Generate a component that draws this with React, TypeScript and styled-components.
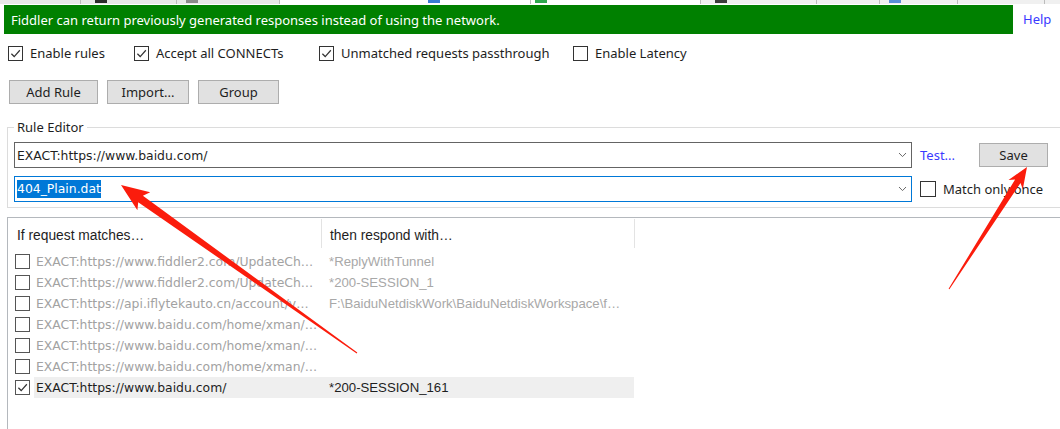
import React from 'react';
import styled, { createGlobalStyle } from 'styled-components';

const UI_FONT = `'Noto Sans', 'Open Sans', sans-serif`;
const LIST_FONT = `'Liberation Sans', Arial, sans-serif`;
const URL_FONT = `'DejaVu Sans', Verdana, sans-serif`;

const GlobalStyle = createGlobalStyle`
    html, body {
        margin: 0;
        padding: 0;
        background: #fff;
    }
    body {
        width: 1060px;
        height: 429px;
        overflow: hidden;
    }
`;

const Page = styled.div`
    color: #1e1e1e;
    display: flex;
    flex-direction: column;
    font-family: ${UI_FONT};
    font-size: 13px;
    height: 429px;
    overflow: hidden;
    position: relative;
    width: 1060px;
`;

/* ---------- tab strip remnant ---------- */

const TabStrip = styled.div`
    display: flex;
    flex-shrink: 0;
    height: 4px;
`;

const TabStub = styled.div<{ $w: number; $bg: string; $mark?: string; $markAt?: number }>`
    background: ${props => props.$bg};
    border-right: 1px solid #bcbcbc;
    flex-shrink: 0;
    position: relative;
    width: ${props => props.$w}px;

    &::after {
        background: ${props => props.$mark || 'transparent'};
        content: '';
        height: 3px;
        left: ${props => props.$markAt || 0}px;
        position: absolute;
        top: 0;
        width: 12px;
    }
`;

/* ---------- banner ---------- */

const BannerRow = styled.div`
    align-items: center;
    display: flex;
    flex-shrink: 0;
    height: 29px;
    margin-top: 1px;
    padding-left: 4px;
`;

const Banner = styled.div`
    align-items: center;
    background: #008000;
    box-sizing: border-box;
    color: #fff;
    display: flex;
    height: 100%;
    padding-left: 7px;
    width: 1009px;
`;

const Link = styled.span`
    color: #3a3aff;
    cursor: pointer;
    font-size: 13px;
`;

const HelpLink = styled(Link)`
    margin-left: 10px;
    margin-top: -2px;
`;

/* ---------- options ---------- */

const OptionsRow = styled.div`
    align-items: center;
    display: flex;
    flex-shrink: 0;
    height: 16px;
    margin-top: 11px;
    padding-left: 8px;
`;

const CheckItem = styled.label<{ $w?: number }>`
    align-items: center;
    display: flex;
    flex-shrink: 0;
    gap: 7px;
    white-space: nowrap;
    ${props => (props.$w ? `width: ${props.$w}px;` : '')}
`;

const Box = styled.span<{ $size: number; $tone: string }>`
    align-items: center;
    background: #fff;
    border: 1px solid ${props => props.$tone};
    box-sizing: border-box;
    display: inline-flex;
    flex-shrink: 0;
    height: ${props => props.$size}px;
    justify-content: center;
    width: ${props => props.$size}px;
`;

const ButtonRow = styled.div`
    display: flex;
    flex-shrink: 0;
    gap: 9px;
    margin-top: 19px;
    padding-left: 9px;
`;

const Button = styled.button<{ $w: number }>`
    background: #e1e1e1;
    border: 1px solid #adadad;
    border-radius: 0;
    color: #1e1e1e;
    font-family: ${UI_FONT};
    font-size: 13px;
    height: 24px;
    padding: 0;
    width: ${props => props.$w}px;
`;

/* ---------- rule editor ---------- */

const RuleEditor = styled.fieldset`
    border: 1px solid #dcdcdc;
    flex-shrink: 0;
    margin: 15px -12px 0 7px;
    padding: 7px 0 5px 6px;
`;

const Legend = styled.legend`
    color: #1e1e1e;
    font-size: 13px;
    line-height: 16px;
    margin-left: 0;
    padding: 0 3px;
`;

const EditorGrid = styled.div`
    align-items: center;
    column-gap: 8px;
    display: grid;
    grid-template-columns: 898px auto;
    row-gap: 8px;
`;

const Combo = styled.div<{ $focused?: boolean }>`
    align-items: center;
    background: #fff;
    border: 1px solid ${props => (props.$focused ? '#0078d7' : '#646464')};
    box-sizing: border-box;
    display: flex;
    font-family: ${URL_FONT};
    font-size: 12.4px;
    height: 26px;
    justify-content: space-between;
    padding: 0 4px 0 2px;
`;

const Selected = styled.span`
    background: #0078d7;
    color: #fff;
    line-height: 18px;
`;

const SideCell = styled.div`
    align-items: center;
    display: flex;
`;

const SaveButton = styled(Button)`
    margin-left: 24px;
`;

/* ---------- rule list ---------- */

const RuleList = styled.div`
    border-left: 1px solid #b4b8bd;
    border-top: 1px solid #b4b8bd;
    flex: 1;
    margin-left: 7px;
    margin-top: 9px;
`;

const ListHeader = styled.div`
    box-sizing: border-box;
    display: flex;
    font-family: ${LIST_FONT};
    font-size: 13.8px;
    height: 33px;
    padding-top: 1px;
`;

const HeaderCell = styled.div<{ $w: number; $pad: number }>`
    align-items: center;
    border-right: 1px solid #e3e3e3;
    box-sizing: border-box;
    display: flex;
    height: 29px;
    padding-left: ${props => props.$pad}px;
    padding-top: 4px;
    width: ${props => props.$w}px;
`;

const Row = styled.div`
    align-items: center;
    display: flex;
    height: 21px;
    padding-left: 7px;
`;

const RowBody = styled.div<{ $selected?: boolean }>`
    align-items: center;
    background: ${props => (props.$selected ? '#efefef' : 'transparent')};
    display: flex;
    height: 100%;
    margin-left: 4px;
    width: 600px;
`;

const MatchCell = styled.span<{ $active?: boolean }>`
    color: ${props => (props.$active ? '#1e1e1e' : '#a2a2a2')};
    font-family: ${URL_FONT};
    font-size: 12.4px;
    padding-left: 2px;
    white-space: nowrap;
    width: 285px;
`;

const ResponseCell = styled.span<{ $active?: boolean }>`
    color: ${props => (props.$active ? '#1e1e1e' : '#a8a8a8')};
    font-family: ${LIST_FONT};
    font-size: 13.2px;
    padding-left: 8px;
    white-space: nowrap;
`;

/* ---------- annotation arrows ---------- */

const Annotations = styled.svg`
    height: 429px;
    left: 0;
    pointer-events: none;
    position: absolute;
    top: 0;
    width: 1060px;
`;

const CheckMark = ({ size }: { size: number }) => (
    <svg width={size - 2} height={size - 2} viewBox="0 0 12 12">
        <polyline points="2.2,6.2 4.8,8.8 10,3" fill="none" stroke="#333" strokeWidth="1.1" />
    </svg>
);

const Chevron = () => (
    <svg width="9" height="6" viewBox="0 0 9 6">
        <polyline points="1,1 4.5,4.6 8,1" fill="none" stroke="#6a6a6a" strokeWidth="1" />
    </svg>
);

const CheckBox = ({ checked, size = 15, tone = '#333' }: { checked?: boolean; size?: number; tone?: string }) => (
    <Box $size={size} $tone={tone}>
        {checked ? <CheckMark size={size} /> : null}
    </Box>
);

const arrowPoints = (
    x1: number,
    y1: number,
    x2: number,
    y2: number,
    headLen: number,
    headHalf: number,
    neckHalf: number,
) => {
    const dx = x2 - x1;
    const dy = y2 - y1;
    const len = Math.hypot(dx, dy);
    const ux = dx / len;
    const uy = dy / len;
    const nx = -uy;
    const ny = ux;
    const pt = (a: number, b: number) => `${(x1 + ux * a + nx * b).toFixed(1)},${(y1 + uy * a + ny * b).toFixed(1)}`;
    return [
        pt(0, -0.5),
        pt(len - headLen + 4, -neckHalf),
        pt(len - headLen, -headHalf),
        pt(len, 0),
        pt(len - headLen, headHalf),
        pt(len - headLen + 4, neckHalf),
        pt(0, 0.5),
    ].join(' ');
};

const RULES = [
    { match: 'EXACT:https://www.fiddler2.com/UpdateCh…', response: '*ReplyWithTunnel' },
    { match: 'EXACT:https://www.fiddler2.com/UpdateCh…', response: '*200-SESSION_1' },
    { match: 'EXACT:https://api.iflytekauto.cn/account/v…', response: 'F:\\BaiduNetdiskWork\\BaiduNetdiskWorkspace\\f…' },
    { match: 'EXACT:https://www.baidu.com/home/xman/…', response: '' },
    { match: 'EXACT:https://www.baidu.com/home/xman/…', response: '' },
    { match: 'EXACT:https://www.baidu.com/home/xman/…', response: '' },
    { match: 'EXACT:https://www.baidu.com/', response: '*200-SESSION_161', active: true },
];

export default function App() {
    return (
        <Page>
            <GlobalStyle />
            <TabStrip>
                <TabStub $w={80} $bg="#e8e8e8" />
                <TabStub $w={95} $bg="#e8e8e8" $mark="#2b2b2b" $markAt={14} />
                <TabStub $w={102} $bg="#e8e8e8" $mark="#8a8a8a" $markAt={9} />
                <TabStub $w={250} $bg="#ffffff" $mark="#3a7bd5" $markAt={148} />
                <TabStub $w={169} $bg="#ffffff" $mark="#2fa84f" $markAt={4} />
                <TabStub $w={115} $bg="#f0f0f0" $mark="#3b3b3b" $markAt={14} />
                <TabStub $w={62} $bg="#f0f0f0" />
                <TabStub $w={77} $bg="#f0f0f0" $mark="#5a8ed8" $markAt={9} />
                <TabStub $w={86} $bg="#f0f0f0" />
                <TabStub $w={22} $bg="#f0f0f0" />
            </TabStrip>

            <BannerRow>
                <Banner>Fiddler can return previously generated responses instead of using the network.</Banner>
                <HelpLink>Help</HelpLink>
            </BannerRow>

            <OptionsRow>
                <CheckItem $w={126}>
                    <CheckBox checked />
                    Enable rules
                </CheckItem>
                <CheckItem $w={185}>
                    <CheckBox checked />
                    Accept all CONNECTs
                </CheckItem>
                <CheckItem $w={254}>
                    <CheckBox checked />
                    Unmatched requests passthrough
                </CheckItem>
                <CheckItem>
                    <CheckBox />
                    Enable Latency
                </CheckItem>
            </OptionsRow>

            <ButtonRow>
                <Button $w={89}>Add Rule</Button>
                <Button $w={82}>Import...</Button>
                <Button $w={81}>Group</Button>
            </ButtonRow>

            <RuleEditor>
                <Legend>Rule Editor</Legend>
                <EditorGrid>
                    <Combo>
                        <span>EXACT:https://www.baidu.com/</span>
                        <Chevron />
                    </Combo>
                    <SideCell>
                        <Link>Test...</Link>
                        <SaveButton $w={69}>Save</SaveButton>
                    </SideCell>
                    <Combo $focused>
                        <Selected>404_Plain.dat</Selected>
                        <Chevron />
                    </Combo>
                    <SideCell>
                        <CheckItem>
                            <CheckBox size={16} />
                            Match only once
                        </CheckItem>
                    </SideCell>
                </EditorGrid>
            </RuleEditor>

            <RuleList>
                <ListHeader>
                    <HeaderCell $w={314} $pad={9}>If request matches…</HeaderCell>
                    <HeaderCell $w={313} $pad={8}>then respond with…</HeaderCell>
                </ListHeader>
                {RULES.map((rule, i) => (
                    <Row key={i}>
                        <CheckBox checked={rule.active} size={15} tone="#555" />
                        <RowBody $selected={rule.active}>
                            <MatchCell $active={rule.active}>{rule.match}</MatchCell>
                            <ResponseCell $active={rule.active}>{rule.response}</ResponseCell>
                        </RowBody>
                    </Row>
                ))}
            </RuleList>

            <Annotations viewBox="0 0 1060 429">
                <polygon points={arrowPoints(357, 353, 121, 185, 28, 11, 4)} fill="#fb1c0c" />
                <polygon points={arrowPoints(949, 289, 1027, 167, 21, 8.5, 3.2)} fill="#fb1c0c" />
            </Annotations>
        </Page>
    );
}
